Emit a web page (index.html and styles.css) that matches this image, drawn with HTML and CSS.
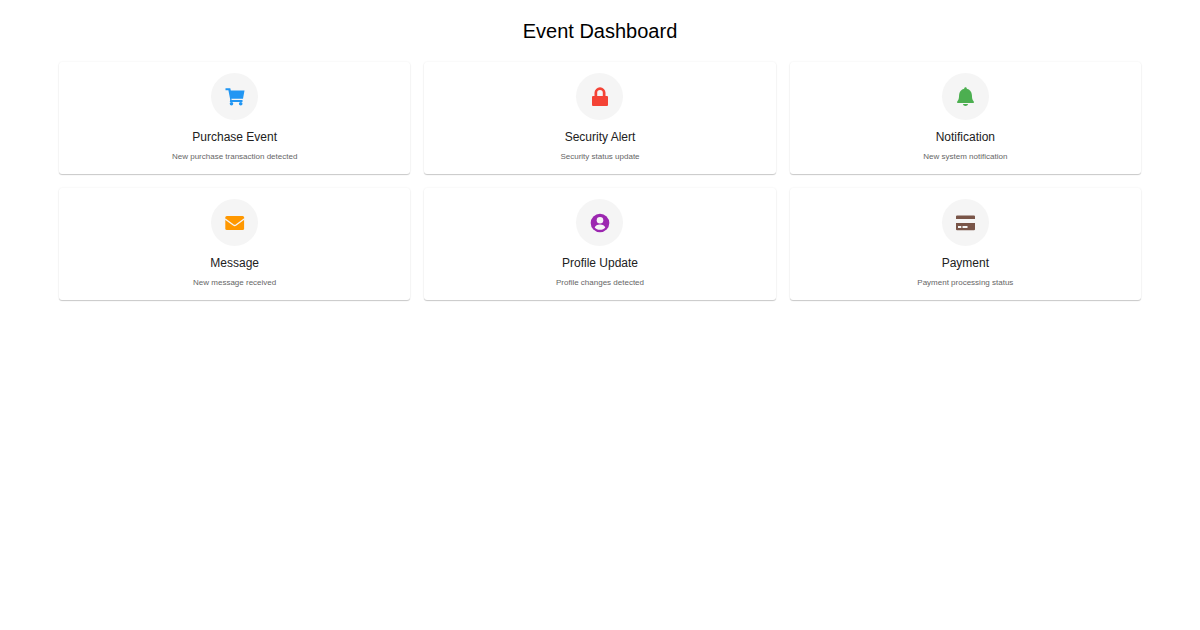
FILE: index.html
```html
<!DOCTYPE html>
<html lang="en">
<head>
<meta charset="utf-8">
<meta name="viewport" content="width=device-width, initial-scale=1">
<title>Event Dashboard</title>
<link rel="stylesheet" href="styles.css">
</head>
<body>
<main class="dashboard">
  <h1 class="dashboard-title">Event Dashboard</h1>
  <div class="event-grid">
    <article class="card">
      <div class="avatar cart">
        <svg class="icon" viewBox="0 0 20 20" aria-hidden="true"><path d="M.5 1.200H5.300l.5 2.300H19.500L18 11.800H6.300L6.700 13H17.500v2H4.800l.4-2.500L3.400 3.200H.5z"/><circle cx="6.500" cy="16.800" r="1.800"/><circle cx="15.700" cy="16.800" r="1.800"/></svg>
      </div>
      <h2 class="card-title">Purchase Event</h2>
      <p class="card-text">New purchase transaction detected</p>
    </article>
    <article class="card">
      <div class="avatar lock">
        <svg class="icon" viewBox="0 0 20 20" aria-hidden="true"><path fill-rule="evenodd" d="M4.500 9V5.800a5.500 5.500 0 0 1 11 0V9H17a1 1 0 0 1 1 1v8a1 1 0 0 1-1 1H3a1 1 0 0 1-1-1v-8a1 1 0 0 1 1-1zM7.200 9h5.600V5.800a2.800 2.800 0 0 0-5.600 0z"/></svg>
      </div>
      <h2 class="card-title">Security Alert</h2>
      <p class="card-text">Security status update</p>
    </article>
    <article class="card">
      <div class="avatar bell">
        <svg class="icon" viewBox="0 0 20 20" aria-hidden="true"><path d="M10.500.3c.8 0 1.300.6 1.300 1.400 3.100.7 4.900 2.900 5.100 6.300.1 3.500.4 4.900 1.900 6.500v1.500H2.200v-1.500C3.700 12.900 4 11.500 4.100 8c.2-3.400 2-5.600 5.100-6.300C9.200.9 9.700.3 10.500.3zM7.900 17h5.200c-.3 1.300-1.300 2-2.600 2s-2.300-.7-2.600-2z"/></svg>
      </div>
      <h2 class="card-title">Notification</h2>
      <p class="card-text">New system notification</p>
    </article>
    <article class="card">
      <div class="avatar mail">
        <svg class="icon" viewBox="0 0 20 20" aria-hidden="true"><rect x=".3" y="3" width="18.800" height="14" rx="1.500"/><path class="cutout-line" d="M.2 6L8.400 12q1.300.9 2.600 0L19.200 6"/></svg>
      </div>
      <h2 class="card-title">Message</h2>
      <p class="card-text">New message received</p>
    </article>
    <article class="card">
      <div class="avatar profile">
        <svg class="icon" viewBox="0 0 20 20" aria-hidden="true"><circle cx="10" cy="10" r="9.300"/><circle class="cutout" cx="10" cy="7.300" r="3.300"/><path class="cutout" d="M4.700 14.500c.7-2 2.600-3 5.300-3s4.600 1 5.300 3c-1.200 1.500-3 2.300-5.300 2.300s-4.100-.8-5.300-2.300z"/></svg>
      </div>
      <h2 class="card-title">Profile Update</h2>
      <p class="card-text">Profile changes detected</p>
    </article>
    <article class="card">
      <div class="avatar payment">
        <svg class="icon" viewBox="0 0 20 20" aria-hidden="true"><path fill-rule="evenodd" d="M1 6V3.500a1 1 0 0 1 1-1h17a1 1 0 0 1 1 1V6zM1 10h19v6.200a1 1 0 0 1-1 1H2a1 1 0 0 1-1-1zM3 13v2h3.300v-2zM7.500 13v2h5v-2z"/></svg>
      </div>
      <h2 class="card-title">Payment</h2>
      <p class="card-text">Payment processing status</p>
    </article>
  </div>
</main>
</body>
</html>
```
FILE: styles.css
```css
* {
  box-sizing: border-box;
}

body {
  margin: 0;
  background: #fff;
  font-family: "Liberation Sans", Arial, sans-serif;
}

.dashboard {
  padding: 19px 59px;
}

.dashboard-title {
  margin: 0 0 19px;
  font-size: 20px;
  font-weight: 400;
  line-height: 24px;
  text-align: center;
  color: #000;
}

.event-grid {
  display: grid;
  grid-template-columns: repeat(3, minmax(0, 1fr));
  gap: 14px;
}

.card {
  display: flex;
  flex-direction: column;
  align-items: center;
  padding: 11px 12px;
  border-radius: 3px;
  text-align: center;
  box-shadow: 0 1px 1px rgba(0, 0, 0, 0.2), 0 0 2px rgba(0, 0, 0, 0.08);
}

.avatar {
  display: flex;
  align-items: center;
  justify-content: center;
  width: 47px;
  height: 47px;
  margin-bottom: 8px;
  border-radius: 50%;
  background: #f5f5f5;
}

.icon {
  width: 20px;
  height: 20px;
  fill: currentColor;
}

.cutout {
  fill: #f5f5f5;
}

.cutout-line {
  fill: none;
  stroke: #f5f5f5;
  stroke-width: 1.4;
}

.cart {
  color: #2196f3;
}

.lock {
  color: #f44336;
}

.bell {
  color: #4caf50;
}

.mail {
  color: #ff9800;
}

.profile {
  color: #9c27b0;
}

.payment {
  color: #795548;
}

.card-title {
  margin: 0 0 5px;
  font-size: 12px;
  font-weight: 400;
  line-height: 18px;
  color: #212121;
}

.card-text {
  margin: 0;
  font-size: 8px;
  line-height: 12px;
  color: #666;
}
```
